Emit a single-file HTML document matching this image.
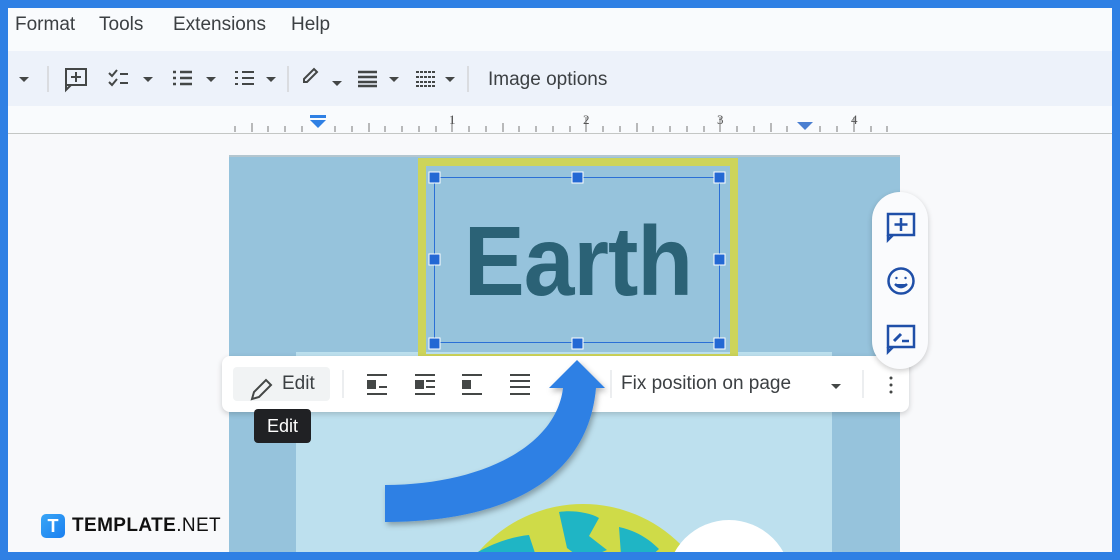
<!DOCTYPE html>
<html><head><meta charset="utf-8"><style>
*{margin:0;padding:0;box-sizing:border-box}
html,body{width:1120px;height:560px;overflow:hidden}
body{background:#2f80e4;font-family:"Liberation Sans",sans-serif;position:relative}
.abs{position:absolute}
#app{position:absolute;left:8px;top:8px;width:1104px;height:544px;background:#f8f9fb;overflow:hidden}
.menu{position:absolute;top:0;left:0;right:0;height:43px;background:#f9fbfd;font-size:19px;color:#3c4043}
.menu span{position:absolute;top:6px}
.tb{position:absolute;top:43px;left:0;right:0;height:55px;background:#edf2fa}
.ruler{position:absolute;top:98px;left:0;right:0;height:28px;background:#f9fbfd;border-bottom:1px solid #c4c7c5}
</style></head><body>
<div id="app">
 <div class="menu"><span style="left:7px">Format</span><span style="left:91px">Tools</span><span style="left:165px">Extensions</span><span style="left:283px">Help</span></div>
 <div class="tb">
  <svg width="640" height="55" style="position:absolute;left:0;top:0" fill="#444746" stroke="#444746">
   <path d="M11 26h10l-5 5z" stroke="none"/>
   <line x1="40" y1="15" x2="40" y2="41" stroke="#c7c7c7"/>
   <rect x="58" y="18" width="20" height="16" fill="none" stroke-width="2"/><path d="M58 34v5l5-5" fill="none" stroke-width="2"/><path d="M68 21v10M63 26h10" stroke-width="2"/>
   <path d="M101 22l3 3 5-6M101 31l3 3 5-6M112 23h8M112 32h8" fill="none" stroke-width="2"/><path d="M135 26h10l-5 5z" stroke="none"/>
   <path d="M165 21h3M165 27h3M165 33h3M172 21h12M172 27h12M172 33h12" stroke-width="2.5"/><path d="M198 26h10l-5 5z" stroke="none"/>
   <path d="M227 21h3M227 27h3M227 33h3M234 21h12M234 27h12M234 33h12" stroke-width="2"/><path d="M258 26h10l-5 5z" stroke="none"/>
   <line x1="280" y1="15" x2="280" y2="41" stroke="#c7c7c7"/>
   <path d="M296 28l10-10 3 3-10 10h-3z" fill="none" stroke-width="2"/><path d="M324 30h10l-5 5z" stroke="none"/>
   <path d="M350 21h19M350 26h19M350 31h19M350 35h19" stroke-width="2.5"/><path d="M381 26h10l-5 5z" stroke="none"/>
   <path d="M408 21h19M408 26h19M408 31h19M408 35h19" stroke-width="2" stroke-dasharray="3 1"/><path d="M437 26h10l-5 5z" stroke="none"/>
   <line x1="460" y1="15" x2="460" y2="41" stroke="#c7c7c7"/>
  </svg>
  <div class="abs" style="left:480px;top:18px;font-size:19px;color:#3c4043">Image options</div>
 </div>
 <div class="ruler">
  <svg width="1104" height="28" style="position:absolute;left:0;top:0" stroke="#777" font-family="Liberation Serif" font-size="13" fill="#555">
   <path d="M227 20v6M244 17v9M260 20v6M277 20v6M294 20v6M327 20v6M344 20v6M361 17v9M377 20v6M394 20v6M411 20v6M428 20v6M444 11v15M461 20v6M478 20v6M495 17v9M511 20v6M528 20v6M545 20v6M562 20v6M578 11v15M595 20v6M612 20v6M629 17v9M645 20v6M662 20v6M679 20v6M696 20v6M712 11v15M729 20v6M746 20v6M763 17v9M779 20v6M812 20v6M829 20v6M846 11v15M863 20v6M879 20v6"/>
   <text x="441" y="18" stroke="none">1</text><text x="575" y="18" stroke="none">2</text><text x="709" y="18" stroke="none">3</text><text x="843" y="18" stroke="none">4</text>
   <rect x="302" y="9" width="16" height="3" fill="#2f80e4" stroke="none"/><path d="M302 14h16l-8 8z" fill="#2f80e4" stroke="none"/>
   <path d="M789 16h16l-8 8z" fill="#4a7fd1" stroke="none"/>
  </svg>
 </div>
 <div class="abs" style="left:221px;top:147px;width:671px;height:397px;background:#96c3dc;border-top:2px solid #b4c6cf"></div>
 <div class="abs" style="left:288px;top:344px;width:536px;height:200px;background:#bde0ee"></div>
 <svg class="abs" style="left:221px;top:344px" width="671" height="200">
  <circle cx="354" cy="290" r="138" fill="#cfdb48"/>
  <path d="M240 205c20-12 40-20 60-22l6 18-20 6 4 20-24-6z M330 160c12-2 30 0 40 6l-10 18 18 14-24 10-16-12z M390 175c18 4 30 12 40 22l-18 16-20-10z M290 240l30-6 6 30z" fill="#1fb5c5"/>
  <circle cx="500" cy="230" r="62" fill="#fff"/>
 </svg>
 <div class="abs" style="left:410px;top:150px;width:320px;height:204px;border:8px solid #cdd45a"></div>
 <div class="abs" style="left:410px;top:204px;width:320px;text-align:center;font-weight:bold;font-size:98px;line-height:98px;color:#2b6276;transform:scaleX(0.93);letter-spacing:-1px">Earth</div>
 <div class="abs" style="left:426px;top:169px;width:286px;height:166px;border:1px solid #2a6fd6"></div>
 <svg class="abs" style="left:420px;top:163px" width="300" height="180" fill="#2368d4" stroke="#fff" stroke-width="1">
  <rect x="1" y="1" width="11" height="11"/><rect x="144" y="1" width="11" height="11"/><rect x="286" y="1" width="11" height="11"/>
  <rect x="1" y="83" width="11" height="11"/><rect x="286" y="83" width="11" height="11"/>
  <rect x="1" y="167" width="11" height="11"/><rect x="144" y="167" width="11" height="11"/><rect x="286" y="167" width="11" height="11"/>
 </svg>
 <div class="abs" style="left:214px;top:348px;width:687px;height:56px;background:#fff;border-radius:8px;box-shadow:0 2px 6px rgba(0,0,0,.18)"></div>
 <div class="abs" style="left:225px;top:359px;width:97px;height:34px;background:#f1f3f4;border-radius:4px"></div>
 <svg class="abs" style="left:214px;top:348px" width="687" height="56" fill="#444746" stroke="#444746">
  <path d="M30 43l2-7 12-12 5 5-12 12z" fill="none" stroke-width="2"/>
  <line x1="121" y1="14" x2="121" y2="42" stroke="#dadce0"/>
  <path d="M145 19h20M145 38h20" stroke-width="2"/><rect x="145" y="24" width="9" height="9" stroke="none"/><path d="M157 31h8" stroke-width="2"/>
  <path d="M193 19h20M193 38h20M204 25h9M204 31h9" stroke-width="2"/><rect x="193" y="24" width="9" height="9" stroke="none"/>
  <path d="M240 19h20M240 38h20" stroke-width="2"/><rect x="240" y="24" width="9" height="9" stroke="none"/>
  <path d="M288 19h20M288 38h20M288 25h20M288 31h20" stroke-width="2"/>
  <line x1="389" y1="14" x2="389" y2="42" stroke="#dadce0"/>
  <path d="M609 28h10l-5 5z" stroke="none"/>
  <line x1="641" y1="14" x2="641" y2="42" stroke="#dadce0"/>
  <circle cx="669" cy="22" r="1.5" stroke="none"/><circle cx="669" cy="29" r="1.5" stroke="none"/><circle cx="669" cy="36" r="1.5" stroke="none"/>
 </svg>
 <div class="abs" style="left:274px;top:365px;font-size:19px;color:#3c4043">Edit</div>
 <div class="abs" style="left:613px;top:365px;font-size:19px;color:#3c4043">Fix position on page</div>
 <div class="abs" style="left:246px;top:401px;width:57px;height:34px;background:#202124;border-radius:4px;color:#fff;font-size:18px;line-height:34px;text-align:center">Edit</div>
 <svg class="abs" style="left:0;top:0" width="1104" height="544">
  <defs><filter id="s"><feDropShadow dx="2" dy="3" stdDeviation="3" flood-opacity=".3"/></filter></defs>
  <path d="M377 477C470 477 548 440 555 380L541 380L569 352L597 380L588 380C580 470 500 514 377 514Z" fill="#2f80e4" filter="url(#s)"/>
 </svg>
 <div class="abs" style="left:864px;top:184px;width:56px;height:177px;background:#fafbfd;border-radius:28px;box-shadow:0 2px 6px rgba(0,0,0,.2)"></div>
 <svg class="abs" style="left:864px;top:184px" width="56" height="177" fill="none" stroke="#1f4fa8" stroke-width="2.5">
  <rect x="16" y="22" width="26" height="21"/><path d="M16 43v5l5-5" /><path d="M29 26v13M22.5 32.5h13"/>
  <circle cx="29" cy="89" r="12.5"/><circle cx="24.5" cy="86" r="1.2" fill="#1f4fa8" stroke="none"/><circle cx="33.5" cy="86" r="1.2" fill="#1f4fa8" stroke="none"/><path d="M23 92q6 6 12 0" fill="#1f4fa8"/>
  <rect x="16" y="134" width="26" height="21"/><path d="M16 155v5l5-5"/><path d="M22 149l7-7" stroke-width="3"/><path d="M30 149h7"/>
 </svg>
 <div class="abs" style="left:33px;top:506px;width:24px;height:24px;border-radius:5px;background:linear-gradient(135deg,#39a6f6,#1a7ff0);color:#fff;font-weight:bold;font-size:18px;text-align:center;line-height:24px">T</div>
 <div class="abs" style="left:64px;top:507px;font-size:19px;color:#111;letter-spacing:0.4px"><b>TEMPLATE</b>.NET</div>
</div>
</body></html>
